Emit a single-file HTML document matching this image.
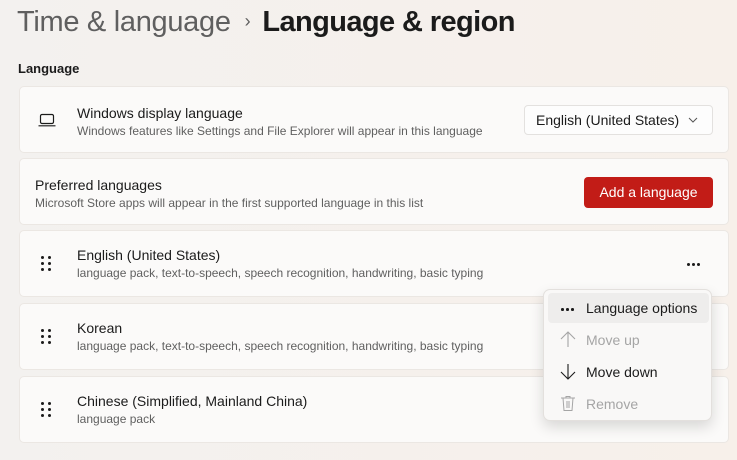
<!DOCTYPE html>
<html><head><style>
*{margin:0;padding:0;box-sizing:border-box}
body{width:737px;height:460px;overflow:hidden;background:linear-gradient(90deg,#f3f1ef,#f7f0ea);font-family:"Liberation Sans",sans-serif;color:#1b1b1b;position:relative}
.abs{position:absolute}
.title{left:17px;top:6px;font-size:29px;font-weight:400;letter-spacing:-0.3px;white-space:nowrap}
.title .a{color:#5f5f5f}
.title b{font-weight:600;letter-spacing:-0.6px}
.title .sep{color:#5f5f5f;font-size:18px;margin:0 12px 0 14px;position:relative;top:-4px}
.sec{left:18px;top:61px;font-size:13px;font-weight:600}
.card{position:absolute;left:19px;width:710px;height:67px;background:#fbfaf9;border:1px solid #ebe7e3;border-radius:5px}
.t{position:absolute;font-size:14px;color:#1b1b1b;white-space:nowrap}
.s{position:absolute;font-size:12px;color:#606060;white-space:nowrap}
.grip{position:absolute;left:21px;top:25px;width:12px;height:17px}
.grip i{position:absolute;width:3px;height:3px;border-radius:50%;background:#1b1b1b}
.menu{left:543px;top:289px;width:169px;height:132px;background:#f9f8f7;border:1px solid #e3e0dd;border-radius:7px;box-shadow:0 6px 14px rgba(0,0,0,.14)}
.mi{position:absolute;left:4px;width:161px;height:30px;border-radius:4px;font-size:14px}
.mi span{position:absolute;left:38px;top:7px;white-space:nowrap}
.dots{position:absolute;width:16px;height:3px}
.dots i{position:absolute;top:0;width:3px;height:3px;border-radius:50%;background:#1b1b1b}
</style></head><body>
<div class="abs title"><span class="a">Time &amp; language</span><span class="sep">›</span><b>Language &amp; region</b></div>
<div class="abs sec">Language</div>

<div class="card" style="top:86px">
  <svg class="abs" style="left:18px;top:26px" width="18" height="14" viewBox="0 0 18 14"><rect x="2.5" y="1.5" width="13" height="9" rx="1.5" fill="none" stroke="#1b1b1b" stroke-width="1.2"/><line x1="0.5" y1="12.8" x2="17.5" y2="12.8" stroke="#1b1b1b" stroke-width="1.2"/></svg>
  <div class="t" style="left:57px;top:18px">Windows display language</div>
  <div class="s" style="left:57px;top:37px">Windows features like Settings and File Explorer will appear in this language</div>
  <div class="abs" style="left:504px;top:18px;width:189px;height:30px;background:#fdfdfd;border:1px solid #e3e1df;border-radius:4px">
    <div class="t" style="left:11px;top:6px">English (United States)</div>
    <svg class="abs" style="left:163px;top:11px" width="10" height="6" viewBox="0 0 10 6"><path d="M1 1l4 4 4-4" fill="none" stroke="#555" stroke-width="1"/></svg>
  </div>
</div>

<div class="card" style="top:158px">
  <div class="t" style="left:15px;top:18px">Preferred languages</div>
  <div class="s" style="left:15px;top:37px">Microsoft Store apps will appear in the first supported language in this list</div>
  <div class="abs" style="left:564px;top:18px;width:129px;height:31px;background:#c21c17;border-radius:4px;color:#fff;font-size:14px;text-align:center;line-height:31px">Add a language</div>
</div>

<div class="card" style="top:230px">
  <div class="grip"><i style="left:0;top:0"></i><i style="left:7px;top:0"></i><i style="left:0;top:6px"></i><i style="left:7px;top:6px"></i><i style="left:0;top:12px"></i><i style="left:7px;top:12px"></i></div>
  <div class="t" style="left:57px;top:16px">English (United States)</div>
  <div class="s" style="left:57px;top:35px">language pack, text-to-speech, speech recognition, handwriting, basic typing</div>
  <div class="dots" style="left:667px;top:32px"><i style="left:0"></i><i style="left:5px"></i><i style="left:10px"></i></div>
</div>

<div class="card" style="top:303px">
  <div class="grip"><i style="left:0;top:0"></i><i style="left:7px;top:0"></i><i style="left:0;top:6px"></i><i style="left:7px;top:6px"></i><i style="left:0;top:12px"></i><i style="left:7px;top:12px"></i></div>
  <div class="t" style="left:57px;top:16px">Korean</div>
  <div class="s" style="left:57px;top:35px">language pack, text-to-speech, speech recognition, handwriting, basic typing</div>
</div>

<div class="card" style="top:376px">
  <div class="grip"><i style="left:0;top:0"></i><i style="left:7px;top:0"></i><i style="left:0;top:6px"></i><i style="left:7px;top:6px"></i><i style="left:0;top:12px"></i><i style="left:7px;top:12px"></i></div>
  <div class="t" style="left:57px;top:16px">Chinese (Simplified, Mainland China)</div>
  <div class="s" style="left:57px;top:35px">language pack</div>
</div>

<div class="abs menu">
  <div class="mi" style="top:3px;background:#eeedec"><div class="dots" style="left:13px;top:15px;width:14px"><i style="left:0;width:2.5px;height:2.5px"></i><i style="left:5px;width:2.5px;height:2.5px"></i><i style="left:10px;width:2.5px;height:2.5px"></i></div><span>Language options</span></div>
  <div class="mi" style="top:35px;color:#a5a5a5">
    <svg class="abs" style="left:12px;top:6px" width="16" height="17" viewBox="0 0 16 17"><path d="M8 16V1M1 8l7-7 7 7" fill="none" stroke="#a5a5a5" stroke-width="1.1"/></svg><span>Move up</span></div>
  <div class="mi" style="top:67px">
    <svg class="abs" style="left:12px;top:6px" width="16" height="17" viewBox="0 0 16 17"><path d="M8 1v15M1 9l7 7 7-7" fill="none" stroke="#1b1b1b" stroke-width="1.1"/></svg><span>Move down</span></div>
  <div class="mi" style="top:99px;color:#a5a5a5">
    <svg class="abs" style="left:12px;top:6px" width="16" height="17" viewBox="0 0 16 17"><path d="M1 3h14M6 3V1.5h4V3M3 3l1 12.5h8L13 3M7 6v7M9 6v7" fill="none" stroke="#a5a5a5" stroke-width="1"/></svg><span>Remove</span></div>
</div>
</body></html>
